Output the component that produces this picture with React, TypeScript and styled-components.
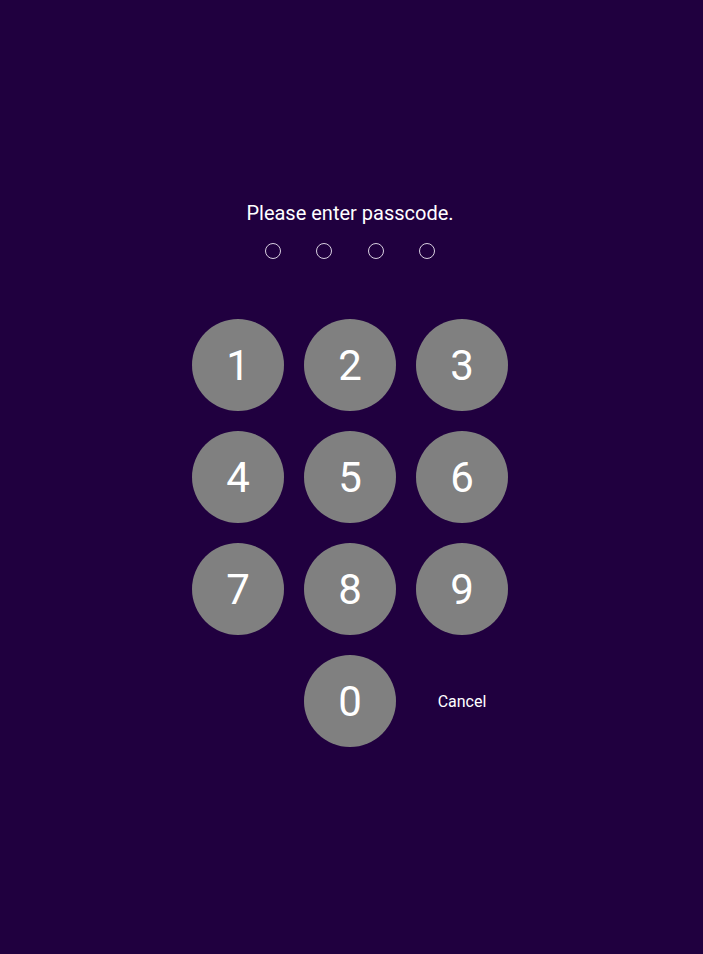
import React from "react";
import styled, { createGlobalStyle } from "styled-components";

const Global = createGlobalStyle`
  html, body { margin: 0; padding: 0; background: #20003f; }
  body { font-family: Roboto, "Noto Sans", sans-serif; color: #fff; }
`;

const Page = styled.div`
  min-height: 954px;
  box-sizing: border-box;
  padding: 201px 3px 0 0;
  display: flex;
  flex-direction: column;
  align-items: center;
`;

const Prompt = styled.div`
  font-size: 20px;
  line-height: 24px;
  color: #fff;
`;

const Dots = styled.div`
  display: flex;
  gap: 35.5px;
  margin-top: 18px;
`;

const Dot = styled.span<{ $filled?: boolean }>`
  width: 16px;
  height: 16px;
  box-sizing: border-box;
  border-radius: 50%;
  border: 1px solid #d8d0e0;
  background: ${(p) => (p.$filled ? "#fff" : "transparent")};
`;

const Pad = styled.div`
  display: grid;
  grid-template-columns: repeat(3, 92px);
  grid-auto-rows: 92px;
  gap: 20px;
  margin-top: 60px;
`;

const Key = styled.button`
  width: 92px;
  height: 92px;
  border-radius: 50%;
  border: none;
  background: #808080;
  color: #fff;
  font-family: Roboto, "Noto Sans", sans-serif;
  font-size: 42px;
  display: flex;
  align-items: center;
  justify-content: center;
  padding: 0;
  cursor: pointer;
`;

const TextKey = styled.button`
  width: 92px;
  height: 92px;
  border: none;
  background: transparent;
  color: #fff;
  font-family: Roboto, "Noto Sans", sans-serif;
  font-size: 16px;
  padding: 0;
  cursor: pointer;
`;

const Spacer = styled.div``;

export default function App() {
  const digits = ["1", "2", "3", "4", "5", "6", "7", "8", "9"];
  return (
    <>
      <Global />
      <Page>
        <Prompt>Please enter passcode.</Prompt>
        <Dots>
          <Dot />
          <Dot />
          <Dot />
          <Dot />
        </Dots>
        <Pad>
          {digits.map((d) => (
            <Key key={d}>{d}</Key>
          ))}
          <Spacer />
          <Key>0</Key>
          <TextKey>Cancel</TextKey>
        </Pad>
      </Page>
    </>
  );
}
